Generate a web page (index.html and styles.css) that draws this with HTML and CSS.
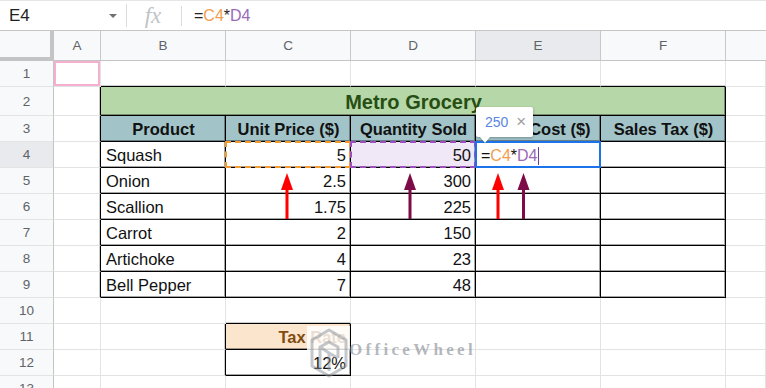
FILE: index.html
```html
<!DOCTYPE html>
<html>
<head>
<meta charset="utf-8">
<link rel="stylesheet" href="styles.css">
</head>
<body>
<div class="app">
  <div class="fbar">
    <div class="namebox"><span class="ref">E4</span><span class="caret"></span></div>
    <div class="sep"></div>
    <div class="fx">fx</div>
    <div class="sep sep2"></div>
    <div class="formula">=<span class="rc">C4</span>*<span class="rd">D4</span></div>
  </div>
  <div class="sheet">
    <div class="corner"></div>
    <div class="ch">A</div><div class="ch">B</div><div class="ch">C</div><div class="ch">D</div><div class="ch ch-on">E</div><div class="ch">F</div><div class="ch last"></div>

    <div class="rh">1</div>
    <div class="cell a1"></div><div class="cell tp"></div><div class="cell tp"></div><div class="cell tp"></div><div class="cell tp"></div><div class="cell tp"></div><div class="cell"></div>

    <div class="rh">2</div>
    <div class="cell lb"></div><div class="cell tb title">Metro Grocery</div><div class="cell"></div>

    <div class="rh">3</div>
    <div class="cell lb"></div><div class="cell tb hd">Product</div><div class="cell tb hd">Unit Price ($)</div><div class="cell tb hd">Quantity Sold</div><div class="cell tb hd">Total Cost ($)</div><div class="cell tb hd">Sales Tax ($)</div><div class="cell"></div>

    <div class="rh rh-on">4</div>
    <div class="cell lb"></div><div class="cell tb">Squash</div><div class="cell tb r sel-c">5</div><div class="cell tb r sel-d">50</div><div class="cell tb edit">=<span class="rc">C4</span>*<span class="rd">D4</span><span class="cursor"></span></div><div class="cell tb"></div><div class="cell"></div>

    <div class="rh">5</div>
    <div class="cell lb"></div><div class="cell tb">Onion</div><div class="cell tb r">2.5</div><div class="cell tb r">300</div><div class="cell tb"></div><div class="cell tb"></div><div class="cell"></div>

    <div class="rh">6</div>
    <div class="cell lb"></div><div class="cell tb">Scallion</div><div class="cell tb r">1.75</div><div class="cell tb r">225</div><div class="cell tb"></div><div class="cell tb"></div><div class="cell"></div>

    <div class="rh">7</div>
    <div class="cell lb"></div><div class="cell tb">Carrot</div><div class="cell tb r">2</div><div class="cell tb r">150</div><div class="cell tb"></div><div class="cell tb"></div><div class="cell"></div>

    <div class="rh">8</div>
    <div class="cell lb"></div><div class="cell tb">Artichoke</div><div class="cell tb r">4</div><div class="cell tb r">23</div><div class="cell tb"></div><div class="cell tb"></div><div class="cell"></div>

    <div class="rh">9</div>
    <div class="cell lb"></div><div class="cell tb">Bell Pepper</div><div class="cell tb r">7</div><div class="cell tb r">48</div><div class="cell tb"></div><div class="cell tb"></div><div class="cell"></div>

    <div class="rh">10</div>
    <div class="cell"></div><div class="cell"></div><div class="cell tp"></div><div class="cell"></div><div class="cell"></div><div class="cell"></div><div class="cell"></div>

    <div class="rh">11</div>
    <div class="cell"></div><div class="cell lb"></div><div class="cell tb r tax">Tax Rate</div><div class="cell"></div><div class="cell"></div><div class="cell"></div><div class="cell"></div>

    <div class="rh">12</div>
    <div class="cell"></div><div class="cell lb"></div><div class="cell tb r">12%</div><div class="cell"></div><div class="cell"></div><div class="cell"></div><div class="cell"></div>

    <div class="rh">13</div>
    <div class="cell"></div><div class="cell"></div><div class="cell"></div><div class="cell"></div><div class="cell"></div><div class="cell"></div><div class="cell"></div>
  </div>

  <div class="tip"><span class="tipval">250</span><span class="tipx">×</span></div>

  <svg class="arrows" width="766" height="388" viewBox="0 0 766 388">
    <g fill="#ff0000">
      <rect x="285.5" y="186" width="3" height="33"/>
      <polygon points="281,190 287,173 293,190"/>
      <rect x="496.5" y="186" width="3" height="33"/>
      <polygon points="492,190 498,173 504,190"/>
    </g>
    <g fill="#7d0b47">
      <rect x="408.5" y="186" width="3" height="33"/>
      <polygon points="404,190 410,173 416,190"/>
      <rect x="522" y="186" width="3" height="33"/>
      <polygon points="517.5,190 523.5,173 529.5,190"/>
    </g>
  </svg>

  <div class="wm">
    <div class="wm-back"></div>
    <svg class="wm-logo" width="38" height="52" viewBox="0 0 38 52">
      <g fill="none" stroke="#8a9098" stroke-width="3" stroke-linejoin="round">
        <polygon points="19,3 36,13 36,39 19,49 2,39 2,13"/>
        <polyline points="10,42 10,20 19,15 28,20 28,31"/>
        <polyline points="19,44 19,26 28,31"/>
        <polyline points="10,20 19,26"/>
      </g>
    </svg>
    <span class="wm-text">OfficeWheel</span>
  </div>
</div>
</body>
</html>
```
FILE: styles.css
```css
* { box-sizing: border-box; }
html, body { margin: 0; padding: 0; background: #fff; }
body { font-family: "Liberation Sans", Arial, sans-serif; color: #000; }

.app { position: relative; width: 766px; height: 388px; overflow: hidden; }

.fbar {
  height: 31px;
  display: flex;
  align-items: center;
  border-top: 1px solid #e6e6e6;
  border-bottom: 1px solid #c6c6c6;
  background: #fff;
}
.namebox {
  width: 126px;
  display: flex;
  align-items: center;
  justify-content: space-between;
  padding: 0 9px 0 9px;
}
.ref { font-size: 17px; color: #1f1f1f; }
.caret {
  width: 0; height: 0;
  border-left: 4px solid transparent;
  border-right: 4px solid transparent;
  border-top: 4px solid #707070;
}
.sep { width: 1px; height: 23px; background: #dadce0; }
.sep2 { height: 20px; }
.fx {
  width: 54px;
  text-align: center;
  font-family: "Liberation Serif", serif;
  font-style: italic;
  font-size: 23px;
  color: #c0c4c8;
  padding-right: 2px;
}
.formula { padding-left: 12px; font-size: 16px; color: #222; }
.rc { color: #f29d4f; }
.rd { color: #9a6bb8; }

.sheet {
  display: grid;
  grid-template-columns: 54px 47px repeat(5, 125px) 1fr;
  grid-template-rows: 30px 26px 29px repeat(11, 26px);
}
.corner {
  background: #f8f9fa;
  border-right: 4px solid #c4c4c4;
  border-bottom: 4px solid #c4c4c4;
}
.ch {
  background: #f8f9fa;
  border-right: 1px solid #c8c8c8;
  border-bottom: 1px solid #c4c4c4;
  display: flex;
  align-items: center;
  justify-content: center;
  font-size: 13.5px;
  color: #5f6368;
}
.ch.last { border-right: none; }
.ch-on { background: #e8eaed; }
.rh {
  background: #f8f9fa;
  border-right: 1px solid #c4c4c4;
  border-bottom: 1px solid #e2e3e3;
  display: flex;
  align-items: center;
  justify-content: center;
  font-size: 13.5px;
  color: #5f6368;
}
.rh-on { background: #e8eaed; }

.cell {
  position: relative;
  border-right: 1px solid #e2e3e3;
  border-bottom: 1px solid #e2e3e3;
  display: flex;
  align-items: center;
  padding: 2px 4px 0 5px;
  font-size: 16.5px;
  color: #111;
  white-space: nowrap;
  overflow: visible;
}
.tb { border-right-color: #000; border-bottom-color: #000; box-shadow: inset -1px -1px 0 rgba(0,0,0,0.35); }
.lb { border-right-color: #000; box-shadow: inset -1px 0 0 rgba(0,0,0,0.2); }
.tp { border-bottom-color: #000; box-shadow: inset 0 -1px 0 rgba(0,0,0,0.2); }
.r { justify-content: flex-end; }
.hd { background: #a2c4c9; font-weight: bold; justify-content: center; }
.title {
  grid-column: span 5;
  background: #b6d7a8;
  color: #274e13;
  font-weight: bold;
  font-size: 20px;
  justify-content: center;
}
.a1 { box-shadow: inset 0 0 0 2px #f6b0cf; }

.sel-c::after, .sel-d::after, .edit::after {
  content: "";
  position: absolute;
  top: -1px; left: -1px; right: -1px; bottom: -1px;
  pointer-events: none;
}
.sel-c::after { border: 2px dashed #f39a2d; }
.sel-d { background: #f0e8f6; }
.sel-d::after { border: 2px dashed #9a4fbc; }
.edit { font-size: 16px; padding-left: 5px; }
.edit::after { border: 2px solid #1a73e8; }
.cursor { display: inline-block; width: 1px; height: 18px; background: #6b3fa0; margin-left: 1px; }

.tax { background: #fce5cd; color: #7f4c12; font-weight: bold; }

.tip {
  position: absolute;
  left: 476px; top: 107px;
  width: 57px; height: 30px;
  background: #fff;
  border-radius: 2px;
  box-shadow: 0 1px 3px rgba(0,0,0,0.28);
  display: flex;
  align-items: center;
  padding-left: 9px;
  gap: 8px;
  font-size: 14px;
}
.tip::after {
  content: "";
  position: absolute;
  left: 4px; bottom: -6px;
  width: 0; height: 0;
  border-left: 5px solid transparent;
  border-right: 5px solid transparent;
  border-top: 6px solid #fff;
  filter: drop-shadow(0 1px 0 rgba(0,0,0,0.15));
}
.tipval { color: #5a86e0; }
.tipx { color: #9e9e9e; font-size: 17px; }

.arrows { position: absolute; left: 0; top: 0; pointer-events: none; }

.wm { position: absolute; left: 307px; top: 326px; width: 160px; height: 54px; pointer-events: none; }
.wm-back { position: absolute; left: 0; top: 0; width: 43px; height: 24px; background: rgba(255,255,255,0.82); }
.wm-logo { position: absolute; left: 3px; top: 1px; opacity: 0.5; }
.wm-text {
  position: absolute;
  left: 42px; top: 14px;
  font-family: "Liberation Serif", serif;
  font-size: 17px;
  font-weight: bold;
  letter-spacing: 3.3px;
  color: rgba(130,136,145,0.6);
}
```
